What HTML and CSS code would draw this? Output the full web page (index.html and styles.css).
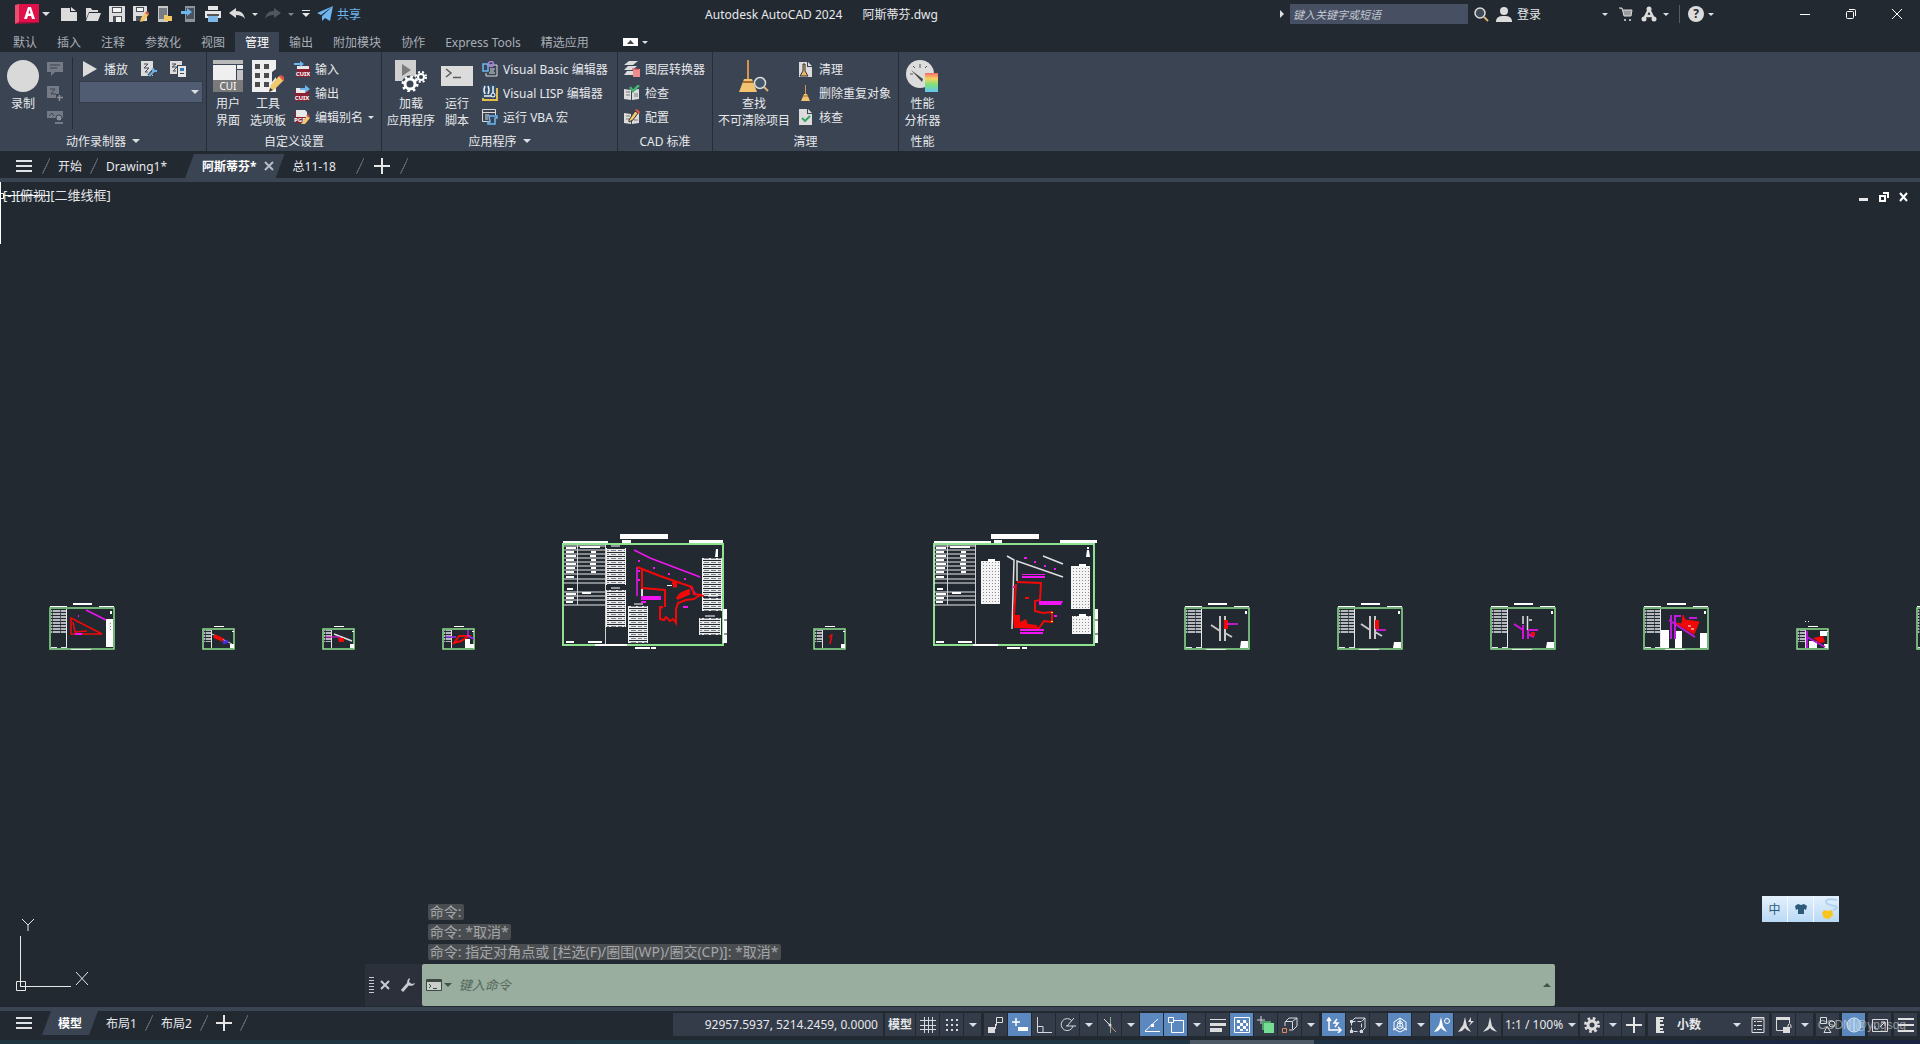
FILE: index.html
```html
<!DOCTYPE html>
<html lang="zh-CN">
<head>
    <meta charset="UTF-8">
    <meta name="viewport" content="width=device-width, initial-scale=1.0">
    <title>Autodesk AutoCAD 2024</title>
    <link rel="stylesheet" href="styles.css">
</head>
<body>
    <!-- title bar -->
    <header class="titlebar">
        <button class="app-btn" aria-label="应用程序菜单">
            <svg width="26" height="22" viewBox="0 0 26 22"><path d="M1 2l4-1v19l-4 1z" fill="#e8506e"/><path d="M5 1h20v19H5z" fill="#e0104a"/><path d="M1 21l4-2h20v1z" fill="#a80c38"/><path d="M10 16l4-12h3l4 12h-3l-1-3h-3l-1 3zM14.500 10.500h2l-1-4z" fill="#fff"/></svg>
            <span class="caret"></span>
        </button>
        <div class="quick">
            <button aria-label="新建"><svg width="16" height="16"><path d="M0 2h9v4h7v9H0z" fill="#dcdcdc"/><path d="M10 1l5 4h-5z" fill="#dcdcdc"/></svg></button>
            <button aria-label="打开"><svg width="16" height="16"><path d="M1 2h5l1 2h6v2H4L1 13z" fill="#dcdcdc"/><path d="M4 7h12l-3 8H1z" fill="#dcdcdc"/></svg></button>
            <button aria-label="保存"><svg width="16" height="16"><path d="M0 0h16v16H0z" fill="#dcdcdc"/><path d="M3 1h10v6H3zM4 10h9v6H4z" fill="#4a4f58"/><path d="M4 2h8v4H4zM7 11h5v5H7z" fill="#f4f4f4"/></svg></button>
            <button aria-label="另存为"><svg width="16" height="16"><path d="M0 0h14v15H0z" fill="#dcdcdc"/><path d="M3 1h8v5H3zM3 10h6v5H3z" fill="#4a4f58"/><path d="M4 2h6v3H4z" fill="#f4f4f4"/><path d="M8 12l5-6 3 2-5 7-4 1z" fill="#f3c765"/><path d="M12 7l2-2 2 2-1 2z" fill="#e0584b"/></svg></button>
            <button aria-label="从 Web 打开"><svg width="16" height="16"><path d="M1 0h10v16H1z" fill="#c8c8c8"/><path d="M2 2h8v11H2z" fill="#777d86"/><path d="M7 9h3l1 1h4v5H7z" fill="#f0c862"/></svg></button>
            <button aria-label="保存到 Web"><svg width="16" height="16"><path d="M4 0h10v16H4z" fill="#8e949c"/><path d="M5 2h8v11H5z" fill="#4c535e"/><path d="M0 5h6V2l5 4-5 4V8H0z" fill="#6db6f0"/></svg></button>
            <button aria-label="打印"><svg width="16" height="16"><path d="M3 0h10v4H3zM0 5h16v7H0z" fill="#e6e6e6"/><path d="M2 8h12v2H2z" fill="#555"/><path d="M3 10h10v6H3z" fill="#7db8e8"/></svg></button>
            <button aria-label="放弃"><svg width="16" height="16"><path d="M0 7l7-5v3c6 0 8 3 9 8-2-3-5-4-9-4v3z" fill="#dcdcdc"/></svg></button>
            <span class="caret small"></span>
            <button aria-label="重做"><svg width="16" height="16"><path d="M16 7L9 2v3C3 5 1 8 0 13c2-3 5-4 9-4v3z" fill="#50565f"/></svg></button>
            <span class="caret small dim"></span>
            <button class="customize" aria-label="自定义快速访问工具栏"><svg width="10" height="10"><path d="M1 1h8v1H1zM1 4h8L5 8z" fill="#e6e6e6"/></svg></button>
            <button class="share"><svg width="16" height="16"><path d="M16 0L0 7l4 2zM16 0L5 10v5l3-3 5 3z" fill="#6db6f0"/></svg>共享</button>
        </div>
        <h1 class="title"><span>Autodesk AutoCAD 2024</span><span>阿斯蒂芬.dwg</span></h1>
        <div class="account">
            <span class="caret right"></span>
            <input class="search" type="text" aria-label="搜索" placeholder="键入关键字或短语">
            <button aria-label="搜索"><svg width="16" height="16"><circle cx="7" cy="7" r="5" fill="#3f4a58" stroke="#dcdcdc" stroke-width="1.500"/><path d="M11 11l4 4" stroke="#d8b47a" stroke-width="2"/></svg></button>
            <button class="login"><svg width="16" height="16"><circle cx="8" cy="5" r="4" fill="#dcdcdc"/><path d="M0 16c0-5 3-6 8-6s8 1 8 6z" fill="#dcdcdc"/></svg>登录</button>
            <span class="caret small"></span>
            <button class="cart" aria-label="应用商店"><svg width="14" height="16"><path d="M0 2h3l2 8h7l1-6H4" fill="#9b9b9b" stroke="#dcdcdc"/><circle cx="6" cy="14" r="1" fill="#dcdcdc"/><circle cx="11" cy="14" r="1" fill="#dcdcdc"/></svg></button>
            <button aria-label="保持连接"><svg width="16" height="16"><path d="M8 3L3 13M8 3l5 10M5 10h6" fill="none" stroke="#dcdcdc" stroke-width="2.500"/><circle cx="8" cy="3" r="2.500" fill="#dcdcdc"/><circle cx="3" cy="13" r="2.500" fill="#dcdcdc"/><circle cx="13" cy="13" r="2.500" fill="#dcdcdc"/></svg></button>
            <span class="caret small tight"></span>
            <i class="bar"></i>
            <button class="help" aria-label="帮助">?</button>
            <span class="caret small tight"></span>
        </div>
        <div class="window-btns">
            <button aria-label="最小化"><svg width="12" height="12"><path d="M1 6.500h10" stroke="#fff"/></svg></button>
            <button aria-label="还原"><svg width="12" height="12" fill="none" stroke="#fff"><rect x="1.500" y="3.500" width="7" height="7" rx="1"/><path d="M4 1.500h5.500q1 0 1 1V8"/></svg></button>
            <button aria-label="关闭"><svg width="12" height="12"><path d="M1 1l10 10M11 1L1 11" stroke="#fff"/></svg></button>
        </div>
    </header>

    <!-- ribbon -->
    <nav class="tabs">
        <button>默认</button>
        <button>插入</button>
        <button>注释</button>
        <button>参数化</button>
        <button>视图</button>
        <button class="active">管理</button>
        <button>输出</button>
        <button>附加模块</button>
        <button>协作</button>
        <button>Express Tools</button>
        <button>精选应用</button>
        <button class="minimize" aria-label="最小化功能区"><svg width="15" height="8"><path d="M0 0h15v8H0z" fill="#fff"/><path d="M4 6h7L7.500 2z" fill="#444"/></svg><span class="caret small"></span></button>
    </nav>

    <section class="ribbon">
        <div class="panel recorder">
            <div class="panel-body">
                <button class="big"><svg width="32" height="32"><circle cx="16" cy="16" r="16" fill="#d9d9d9"/></svg>录制</button>
                <div class="stack dimmed">
                    <button aria-label="插入消息"><svg width="16" height="16"><path d="M0 1h16v10H8l-4 4v-4H0z" fill="#747b86"/><path d="M3 4h10M3 7h7" stroke="#3b4453"/></svg></button>
                    <button aria-label="插入基点"><svg width="16" height="16"><path d="M0 1h12v12H0z" fill="#747b86"/><path d="M3 4h5l-4 5h5" stroke="#3b4453" fill="none"/><path d="M9 9h7v7H9z" fill="#3b4453"/><path d="M10 12.500h6M12.500 10v6" stroke="#8a919b" stroke-width="1.500"/></svg></button>
                    <button aria-label="用户输入请求"><svg width="16" height="16"><path d="M0 2h16v7H0zM8 13h8v2H8z" fill="#747b86"/><circle cx="12" cy="9" r="3" fill="#8a919b" stroke="#3b4453"/><path d="M2 7l3-3 2 3" stroke="#3b4453" fill="none"/></svg></button>
                </div>
                <i class="rule"></i>
                <div class="player">
                    <div class="player-row">
                        <button class="small"><svg width="16" height="16"><path d="M1 0v16l14-8z" fill="#dcdcdc"/></svg>播放</button>
                        <button aria-label="首选项"><svg width="16" height="16"><path d="M0 0h12v15H0z" fill="#dcdcdc"/><path d="M3 3h4L3 7h5L4 11h3" stroke="#444c58" fill="none"/><path d="M8 15l6-7" stroke="#3b4453" stroke-width="4"/><path d="M8 15l6-6" stroke="#6fb0e6" stroke-width="2"/><path d="M12 7v3h4" stroke="#6fb0e6" fill="none" stroke-width="2"/></svg></button>
                        <button aria-label="管理动作宏"><svg width="16" height="16"><path d="M0 0h12v13H0z" fill="#dcdcdc"/><path d="M2 3h4L2 6h5L3 10h3" stroke="#444c58" fill="none"/><path d="M7 4h9v12H7z" fill="#3b4453"/><path d="M8 5h8v11H8z" fill="#e6e6e6"/><path d="M10 7h4v3h-4z" fill="#3478b8"/><path d="M10 12.500h4" stroke="#444c58"/></svg></button>
                    </div>
                    <div class="combo"><select aria-label="可用动作宏"><option></option></select></div>
                </div>
            </div>
            <button class="panel-title">动作录制器 <span class="caret"></span></button>
        </div>

        <div class="panel custom">
            <div class="panel-body">
                <button class="big"><svg width="30" height="32"><path d="M0 0h30v4H0z" fill="#b9b9b9"/><path d="M0 5h23v15H0zM24 5h6v4h-6z" fill="#efefef"/><path d="M24 10h6v10h-6z" fill="#c4c4c4"/><path d="M0 20h30v12H0z" fill="#7a7a7a"/><text x="15" y="30" text-anchor="middle" class="icon-text">CUI</text></svg>用户<br>界面</button>
                <button class="big"><svg width="32" height="32"><path d="M0 0h24v32H0z" fill="#efefef"/><path d="M3 4h5v5H3zM12 4h5v5h-5zM3 13h5v5H3zM12 13h5v5h-5zM3 22h5v5H3zM12 22h5v5h-5z" fill="#4b4b4b"/><path d="M20 12l4-3v8l-4 5z" fill="#3b4453"/><path d="M17 32l2-7 8-9 5 4-9 9z" fill="#f2c96d"/><path d="M27 16l2-1 3 2v3l-1 1z" fill="#e5534b"/><path d="M17 32l1-4 3 2z" fill="#333"/></svg>工具<br>选项板</button>
                <div class="stack">
                    <button class="small"><svg width="16" height="16"><path d="M3 5h13v11H3z" fill="#8d1f33"/><path d="M3 5h12v3H3z" fill="#e8e8e8"/><text x="9" y="15" class="tiny">CUIX</text><path d="M0 2h6V0l4 3-4 3V4H0z" fill="#6db6f0"/></svg>输入</button>
                    <button class="small"><svg width="16" height="16"><path d="M1 5h14v11H1z" fill="#8d1f33"/><path d="M2 3h9v5H2z" fill="#e8e8e8"/><text x="8" y="15" class="tiny">CUIX</text><path d="M6 3h5V0l5 4-5 4V5H6z" fill="#6db6f0"/></svg>输出</button>
                    <button class="small"><svg width="16" height="16"><path d="M1 2h12v12H1z" fill="#8d1f33"/><path d="M2 1h9l2 2v5H2z" fill="#e8e8e8"/><text x="6" y="13" class="tiny">PGP</text><path d="M7 15l6-8 3 2-5 6z" fill="#f2c96d"/><path d="M12 7l2-2 2 3z" fill="#e5534b"/></svg>编辑别名 <span class="caret small"></span></button>
                </div>
            </div>
            <div class="panel-title">自定义设置</div>
        </div>

        <div class="panel apps">
            <div class="panel-body">
                <button class="big"><svg width="32" height="32"><path d="M0 0h21v21H0z" fill="#cfcfcf"/><path d="M7 4v12l9-6z" fill="#7c7c7c"/><circle cx="15" cy="24" r="5" fill="#3b4453" stroke="#3b4453" stroke-width="7"/><circle cx="15" cy="24" r="5" fill="none" stroke="#fff" stroke-width="3"/><circle cx="15" cy="24" r="7" fill="none" stroke="#fff" stroke-width="3" stroke-dasharray="2.500 3"/><circle cx="26" cy="17" r="3" fill="#3b4453" stroke="#fff" stroke-width="2"/><circle cx="26" cy="17" r="5" fill="none" stroke="#fff" stroke-width="2" stroke-dasharray="2 2"/></svg>加载<br>应用程序</button>
                <button class="big"><svg width="32" height="32"><path d="M0 6h32v20H0z" fill="#dcdcdc"/><path d="M5 9l5 4-5 4M12 17.500h8" stroke="#5b5b5b" fill="none" stroke-width="1.500"/></svg>运行<br>脚本</button>
                <div class="stack">
                    <button class="small"><svg width="16" height="16" fill="none"><path d="M5 4h10v11H4v-3" stroke="#dcdcdc"/><path d="M8 8h5M8 10h4M7 12h6" stroke="#dcdcdc"/><rect x="1" y="3" width="5" height="7" stroke="#6db6f0" stroke-width="1.500"/><circle cx="9" cy="3" r="2.500" stroke="#a883e0" stroke-width="1.500"/></svg>Visual Basic 编辑器</button>
                    <button class="small"><svg width="16" height="16" fill="none"><path d="M1 13v2h14V3" stroke="#e5bd4e" stroke-width="2"/><path d="M0 0h14v13H0z" fill="#31506f"/><path d="M3 1Q1 5 3 9M6 1q2 4 0 8M11 1v11M2 11h11" stroke="#f0f0f0" stroke-width="1.500"/><circle cx="11" cy="10" r="2" fill="#31506f" stroke="#fff"/></svg>Visual LISP 编辑器</button>
                    <button class="small"><svg width="16" height="16" fill="none"><path d="M7 12.500H.500V.500h13V6M1 3.500h12M3 6h4M3 8h3M3 10h3" stroke="#dcdcdc"/><path d="M7 7h8v2h-2v6H6v-2h2z" stroke="#6db6f0" stroke-width="1.500"/></svg>运行 VBA 宏</button>
                </div>
            </div>
            <button class="panel-title">应用程序 <span class="caret"></span></button>
        </div>

        <div class="panel standards">
            <div class="panel-body">
                <div class="stack">
                    <button class="small"><svg width="16" height="16"><path d="M5 0h9L9 4H0zM4 5h9l-4 4H0zM3 10h6v4H0z" fill="#dcdcdc"/><path d="M9 8h7v8H9z" fill="#ee8b8e"/><path d="M8 8h7" stroke="#c2434b"/></svg>图层转换器</button>
                    <button class="small"><svg width="16" height="16"><path d="M0 4l7 1v10l-7-1zM8 5l7-1v10l-7 1z" fill="#dcdcdc"/><path d="M2 7h4M2 10h4M10 9h4M10 11h4" stroke="#7a7a7a"/><path d="M6 2l3 4 6-6" fill="none" stroke="#45b072" stroke-width="2.500"/></svg>检查</button>
                    <button class="small"><svg width="16" height="16"><path d="M0 4l7 1v10l-7-1zM8 5l7-1v10l-7 1z" fill="#dcdcdc"/><path d="M2 7h4M2 10h4M10 11h4" stroke="#7a7a7a"/><path d="M5 11l6-9 3 2-5 7-4 2z" fill="#f2c96d" stroke="#333"/><path d="M11 1l2-1 3 3-1 2z" fill="#e5534b"/></svg>配置</button>
                </div>
            </div>
            <div class="panel-title">CAD 标准</div>
        </div>

        <div class="panel cleanup">
            <div class="panel-body">
                <button class="big"><svg width="32" height="32"><path d="M9 0h2v19H9z" fill="#d6924f"/><path d="M6 19h8l5 13H1z" fill="#f2c472"/><path d="M5 22h10" stroke="#a96d2f" stroke-width="2"/><circle cx="22" cy="23" r="5.500" fill="#46576a" stroke="#dcdcdc" stroke-width="1.500"/><path d="M26 27l4 4" stroke="#d8b47a" stroke-width="2"/></svg>查找<br>不可清除项目</button>
                <div class="stack">
                    <button class="small"><svg width="16" height="16"><path d="M1 1h8v5h5v10H1z" fill="#dcdcdc"/><path d="M10 1l4 4h-4z" fill="#dcdcdc"/><path d="M5 3h2v7l3 5H2l3-5z" fill="#e9b869" stroke="#333"/></svg>清理</button>
                    <button class="small"><svg width="16" height="16"><path d="M7 0h1v9H7z" fill="#d6924f"/><path d="M6 9h3l3 7H3z" fill="#f2c472"/><path d="M5 11h5" stroke="#a96d2f"/></svg>删除重复对象</button>
                    <button class="small"><svg width="16" height="16"><path d="M1 0h8v5h5v11H1z" fill="#dcdcdc"/><path d="M10 0l4 4h-4z" fill="#dcdcdc"/><path d="M4 9l3 3 5-5" fill="none" stroke="#3aa566" stroke-width="2"/></svg>核查</button>
                </div>
            </div>
            <div class="panel-title">清理</div>
        </div>

        <div class="panel perf">
            <div class="panel-body">
                <button class="big"><svg width="32" height="32"><defs><linearGradient id="heat" x2="0" y2="1"><stop offset="0" stop-color="#f56b6b"/><stop offset=".3" stop-color="#f7d35e"/><stop offset=".6" stop-color="#7fe07a"/><stop offset="1" stop-color="#63c5f5"/></linearGradient></defs><circle cx="14" cy="14" r="14" fill="#dcdcdc"/><path d="M5 10l11 12 1-3z" fill="#4a4a4a"/><path d="M14 4v4M7 6l2 2M21 6l-2 2M4 14h3" stroke="#555"/><path d="M19 13h13v19H19z" fill="url(#heat)"/></svg>性能<br>分析器</button>
            </div>
            <div class="panel-title">性能</div>
        </div>
    </section>

    <!-- drawing tabs -->
    <nav class="files">
        <button class="menu" aria-label="文件选项卡菜单"></button>
        <i class="slash"></i>
        <button>开始</button>
        <i class="slash"></i>
        <button>Drawing1*</button>
        <div class="current">
            <button>阿斯蒂芬*</button>
            <button aria-label="关闭图形"><svg width="10" height="10"><path d="M1 1l8 8M9 1L1 9" stroke="#b8bdc6" stroke-width="2"/></svg></button>
        </div>
        <button class="third">总11-18</button>
        <i class="slash"></i>
        <button class="plus" aria-label="新图形"></button>
        <i class="slash"></i>
    </nav>

    <main class="viewport">
        <svg class="model" aria-label="模型空间">
            <defs>
                <pattern id="rows" width="20" height="4" patternUnits="userSpaceOnUse"><path d="M0 0h20v3H0z" fill="#e8e8e8"/><path d="M1 1.500h5M8 1.500h4M14 1.500h5" stroke="#7b8088"/></pattern>
                <pattern id="dots" width="3" height="3" patternUnits="userSpaceOnUse"><path d="M0 0h3v3H0z" fill="#f4f4f4"/><path d="M1 1h1v1H1z" fill="#8b8f95"/></pattern>
                <pattern id="lines" width="8" height="3" patternUnits="userSpaceOnUse"><path d="M0 0h8v2H0z" fill="#b4b7bb"/><path d="M3 0h1v2H3z" fill="#555b64"/></pattern>
                <g id="legend">
                    <path d="M0 2h41M0 6h41M0 10h41M0 14h41M0 18h41M0 22h41M0 26h41M0 30h41M0 35h41M0 39h41M0 48h41M0 52h41M0 56h41M0 61h41" stroke="#e8e8e8"/>
                    <path d="M2 4h10M2 8h8M2 12h10M2 16h8M2 20h10M2 24h9M2 28h8M2 33h8M3 45h6M2 50h10M2 54h8M2 58h7M16 3h20M27 8h5M26 12h6M27 16h5M26 20h6M27 24h5M27 28h5M18 49h9M2 98h8M24 98h14" stroke="#fff" stroke-width="2"/>
                    <path d="M13.500 0v61M41.500 0v100" stroke="#d0d0d0"/>
                </g>
                <g id="sheet-m">
                    <path d="M1 1h64v41H1z" fill="none" stroke="#8fe08f" stroke-width="1.500"/>
                    <path d="M24-4h19v2H24z" fill="#fff"/>
                    <path d="M1-.500h17M50-.500h15" stroke="#fff"/>
                    <path d="M2 3h16v23H2z" fill="url(#lines)"/>
                    <path d="M17.500 2v39M2 40.500h6M12 40.500h5M22 42.500h20" stroke="#e8e8e8"/>
                    <path d="M61 4h2v3h-2z" fill="#fff"/>
                </g>
                <g id="sheet-s">
                    <path d="M1 0h31v20H1z" fill="none" stroke="#8fe08f" stroke-width="1.500"/>
                    <path d="M12-3h10v1H12z" fill="#fff"/>
                    <path d="M2 1h7v12H2z" fill="url(#lines)"/>
                    <path d="M9.500 1v18" stroke="#ddd"/>
                    <path d="M28 15h4v4h-4zM30 2h2v1h-2z" fill="#fff"/>
                </g>
            </defs>
            <g transform="translate(0 -182)">
                <g transform="translate(550 525)">
                    <path d="M13 19h160v101H13z" fill="none" stroke="#8fe08f" stroke-width="2"/>
                    <path d="M70 9h48v5H70zM72 15h9v3h-9zM13 16h45v2H13zM139 15h34v3h-34z" fill="#fff"/>
                    <use href="#legend" x="14" y="19"/>
                    <path d="M56 23h20v37H56zM56 65h20v37H56zM78 81h20v37H78zM152 33h20v38h-20zM152 73h20v13h-20zM149 93h22v17h-22z" fill="url(#rows)"/>
                    <path d="M56.500 23v37M75.500 23v37M56.500 65v37M75.500 65v37M78.500 81v37M97.500 81v37M152.500 33v53M171.500 33v53M149.500 93v17M170.500 93v17" stroke="#f0f0f0"/>
                    <path d="M61 21h9M61 63h9M84 79h9M155 91h10M158 71h10" stroke="#fff"/>
                    <path d="M173 84h4v34h-4zM166 24h2v8h-3zM85 122h15v2H85zM101 122h5v2h-5zM45 119h32v2H45z" fill="#fff"/>
                    <path d="M174 95h3M174 109h3" stroke="#222931"/>
                    <path d="M84 25l16 8 50 19M87 42v29M140 61l6 9" fill="none" stroke="#f214f2" stroke-width="1.500"/>
                    <path d="M91 71h20v4H91zM91 76h5v2h-5zM88 35h2v2h-2zM103 42h2v2h-2zM118 48h2v2h-2zM134 53h2v2h-2zM133 81h5v2h-5zM88 45h2v2h-2zM88 54h2v2h-2z" fill="#f214f2"/>
                    <path d="M92 46v25" stroke="#ddd" stroke-width="2"/>
                    <path d="M87 42l23 9 32 11 2 8M92 45v18l23 2v17M109 82h4l-3 1v11l4 1 2-3 4 4 3-2 3 4v-14l2-6 8-3 8-1 6-4 4 1M152 70l-8-1" fill="none" stroke="#f30808" stroke-width="2"/>
                    <path d="M127 74l4-5 9-4M129 73l11-5M122 58h5M123 61h4" fill="none" stroke="#f30808" stroke-width="3"/>
                    <path d="M117 60h5v1h-5z" fill="#fff"/>
                </g>
                <g transform="translate(925 525)">
                    <path d="M9 19h160v101H9z" fill="none" stroke="#8fe08f" stroke-width="2"/>
                    <path d="M66 9h48v5H66zM69 15h8v3h-8zM9 16h57v2H9zM135 15h37v3h-37z" fill="#fff"/>
                    <use href="#legend" x="9" y="19"/>
                    <path d="M56 36h19v43H56zM146 41h19v43h-19zM147 91h19v18h-19z" fill="url(#dots)"/>
                    <path d="M63 34h7v3h-7zM154 39h7v3h-7zM154 89h7v3h-7zM170 84h3v34h-3zM82 122h13v2H82zM97 122h5v2h-5zM48 119h25v2H48zM162 22h2v2h-2zM162 25h2l1 7h-4z" fill="#fff"/>
                    <path d="M170 95h3M170 109h3" stroke="#222931"/>
                    <path d="M82 31l7 4-2 69M92 56V36l46 16M118 31l20 8" fill="none" stroke="#e0e0e0" stroke-width="1.500"/>
                    <path d="M97 49h23v1H97zM97 51h23v2H97zM114 76h24l-2 4h-22zM95 104h24v2H95zM95 107h23v2H95zM99 32h3v2h-3zM109 36h2v2h-2zM119 40h2v2h-2zM129 43h2v2h-2zM88 61h3v2h-3zM88 83h2v2h-2zM129 90h3v2h-3z" fill="#f214f2"/>
                    <path d="M92 57l24 1-1 17-5 1v10l8 2 9-1v10l-8-1-5 7-24-1-1-12 2-31" fill="none" stroke="#f30808" stroke-width="2"/>
                    <path d="M90 90h5v7l6-3 2 5 9 1v3H90zM100 72h4v2h-4z" fill="#f30808"/>
                    <path d="M126 96h2v1h-2zM126 87h2v1h-2z" fill="#ffe600"/>
                </g>

                <g transform="translate(49 607)">
                    <use href="#sheet-m"/>
                    <path d="M57 12h7v28h-7z" fill="#fff"/><path d="M59 14h3v10h-3z" fill="url(#dots)"/>
                    <path d="M37 3l20 10" stroke="#f214f2" stroke-width="1.500"/>
                    <path d="M22 11l31 16H22zM24 15l2 10 12-1" fill="none" stroke="#f30808" stroke-width="1.500"/>
                    <path d="M26 26h7v2h-7zM29 8h1v2h-1z" fill="#f214f2"/>
                </g>
                <g transform="translate(202 629)">
                    <use href="#sheet-s"/>
                    <path d="M10 5l20 10" stroke="#ddd"/><path d="M12 7l9 4" stroke="#f30808" stroke-width="4"/><path d="M21 14l5-2" stroke="#4a2ee0" stroke-width="3"/>
                </g>
                <g transform="translate(322 629)">
                    <use href="#sheet-s"/>
                    <path d="M12 5l18 7" stroke="#e0e0e0" stroke-width="1.500"/><path d="M4 8h14" stroke="#f214f2"/><path d="M16 9h6v4h-5z" fill="#f30808"/>
                </g>
                <g transform="translate(442 629)">
                    <use href="#sheet-s"/>
                    <path d="M12 14l5-7h10l-8 5z" fill="none" stroke="#f30808" stroke-width="2"/><path d="M26 1v6l6 3M4 8h10" fill="none" stroke="#9b30ee" stroke-width="1.500"/><path d="M23 10h5v9h-5z" fill="#fff"/>
                </g>
                <g transform="translate(813 629)">
                    <use href="#sheet-s"/>
                    <path d="M19 5l-2 10M16 8l3-2" stroke="#f30808" stroke-width="1.500"/>
                </g>
                <g transform="translate(1184 607)">
                    <use href="#sheet-m"/>
                    <path d="M36 9v25M41 9v25M27 18l9 6M41 26l7 4" stroke="#c9c9c9" stroke-width="2"/><path d="M42 13v9" stroke="#f30808" stroke-width="4"/><path d="M43 17h11" stroke="#f214f2" stroke-width="1.500"/><path d="M57 34h7v7h-8z" fill="#fff"/>
                </g>
                <g transform="translate(1337 607)">
                    <use href="#sheet-m"/>
                    <path d="M33 9v23M38 9v23M24 17l9 6M38 25l7 4" stroke="#c9c9c9" stroke-width="2"/><path d="M40 13v9" stroke="#f30808" stroke-width="4"/><path d="M39 23h10" stroke="#f214f2" stroke-width="1.500"/><path d="M57 35h7v6h-8z" fill="#fff"/>
                </g>
                <g transform="translate(1490 607)">
                    <use href="#sheet-m"/>
                    <path d="M33 9v8M37.500 9v14M39 13h3" stroke="#e0e0e0" stroke-width="1.500"/><path d="M24 17l9 6M33 18v14M38 23v9M38 23h10M38 27l6 3" stroke="#d014d8" stroke-width="2"/><path d="M41 25h4v4h-4z" fill="#f30808"/><path d="M57 35h7v6h-8z" fill="#fff"/>
                </g>
                <g transform="translate(1643 607)">
                    <use href="#sheet-m"/>
                    <path d="M18 23h8v18h-8zM32 24h7v17h-7zM57 26h7v15h-7z" fill="#fff"/><path d="M28 8v24M32 8v24M26 13l26 17M33 9h5M46 11h8" stroke="#c01ae0" stroke-width="2"/><path d="M33 16l18 11 5-12-14-2-2-5-1 9z" fill="#f30808" stroke="#f30808"/><path d="M45 19h3M48 22h3" stroke="#fff"/>
                </g>
                <g transform="translate(1796 629)">
                    <use href="#sheet-s"/>
                    <path d="M9-8h1v1H9zM12-8h1v1h-1zM13 12h8v7h-8zM24 2h7v5h-7z" fill="#fff"/><path d="M11 2v17M11 8l18 10" stroke="#b01ad0" stroke-width="2"/><path d="M17 9l10-2 2 6-5 1z" fill="#f30808"/>
                </g>
                <use href="#sheet-m" x="1916" y="607"/>
                <!-- crosshair -->
                <path d="M0 193.500h3.500v5H0M4 195.500h46" stroke="#fff" fill="none"/><path d="M.500 182v62" stroke="#fff"/>
            </g>
        </svg>
        <div class="view-label">[-][俯视][二维线框]</div>
        <div class="view-btns">
            <button aria-label="最小化"><svg width="10" height="10"><path d="M0 6h9v3H0z" fill="#e8e8e8"/></svg></button>
            <button aria-label="还原"><svg width="10" height="10" fill="none" stroke="#fff" stroke-width="2"><path d="M1 4h5v5H1zM4 1h5v5"/></svg></button>
            <button aria-label="关闭"><svg width="10" height="10"><path d="M1 1l7 8M8 1L1 9" stroke="#fff" stroke-width="2"/></svg></button>
        </div>
        <svg class="ucs" width="80" height="80" fill="none" stroke="#e8e8e8"><path d="M6.500 20v50M2.500 65.500h9v9h-9zM6 70.500h51M8 3l6 6 6-6M14 9v6M62 56l12 13M74 56L62 69"/></svg>
        <div class="ime">
            <button>中</button>
            <button aria-label="皮肤"><svg width="14" height="12"><path d="M4 1l3 1 3-1 3 2-1 4-2-1v5H4V6L2 7 1 3z" fill="#2c5a78"/></svg></button>
            <button aria-label="工具箱"><svg width="24" height="24"><path d="M22 3Q10 1 11 5q1 3 9 4 4 2-2 4" fill="none" stroke="#b3d2ef" stroke-width="2"/><path d="M9 13l4 1 4-1 1 5-4 4-5-1-2-5z" fill="#f7c51e"/></svg></button>
        </div>
        <div class="command">
            <ul class="history">
                <li>命令:</li>
                <li>命令: *取消*</li>
                <li>命令: 指定对角点或 [栏选(F)/圈围(WP)/圈交(CP)]: *取消*</li>
            </ul>
            <div class="prompt">
                <div class="prompt-tools">
                    <i class="grip"></i>
                    <button aria-label="关闭"><svg width="10" height="10"><path d="M1 1l8 8M9 1L1 9" stroke="#c8ccd2" stroke-width="2"/></svg></button>
                    <button class="wrench" aria-label="自定义"><svg width="16" height="16"><path d="M2 14l7-8" stroke="#c8ccd2" stroke-width="3"/><path d="M10 1a4 4 0 1 0 5 5l-3 1-3-2z" fill="#c8ccd2"/></svg></button>
                </div>
                <div class="prompt-line">
                    <button aria-label="最近使用的命令"><svg width="16" height="12"><path d="M.500.500h15v11H.500z" fill="#c9d0cc" stroke="#3d4a44"/><path d="M1 1h14v2H1z" fill="#3d4a44"/><path d="M3 5l2 2-2 2M7 9.500h4" stroke="#3d4a44" fill="none"/></svg><span class="caret green"></span></button>
                    <input type="text" aria-label="命令行" placeholder="键入命令">
                    <span class="caret up"></span>
                </div>
            </div>
        </div>
    </main>

    <!-- layout tabs and status bar -->
    <footer class="status">
        <nav class="layouts">
            <button class="menu" aria-label="布局菜单"></button>
            <button class="current">模型</button>
            <button>布局1</button>
            <i class="slash"></i>
            <button>布局2</button>
            <i class="slash"></i>
            <button class="plus" aria-label="新建布局"></button>
            <i class="slash"></i>
        </nav>
        <div class="tools">
            <button class="coords">92957.5937, 5214.2459, 0.0000</button>
            <button class="space">模型</button>
            <button class="t" aria-label="栅格"><svg width="16" height="16"><path d="M4.500 0v16M8.500 0v16M12.500 0v16M0 3.500h16M0 8.500h16M0 12.500h16" stroke="#d5d9df"/></svg></button>
            <button class="t" aria-label="捕捉"><svg width="16" height="16"><path d="M2 3h13M2 8h13M2 13h13" stroke="#d5d9df" stroke-width="2" stroke-dasharray="2 3"/></svg></button>
            <button class="c" aria-label="捕捉设置"><span class="caret"></span></button>
            <button class="t gap" aria-label="推断约束"><svg width="16" height="16"><path d="M0 10h7v6H0z" fill="#dcdcdc"/><path d="M8.500 8.500v-8h6v5h-6M7.500 12V7" fill="none" stroke="#dcdcdc"/></svg></button>
            <button class="t on" aria-label="动态输入"><svg width="18" height="16"><path d="M1 5h8M5 1v8" stroke="#fff" stroke-width="1.500"/><path d="M7 10h10v4H7z" fill="#fff"/></svg></button>
            <button class="t" aria-label="正交"><svg width="16" height="16"><path d="M1.500 0v15.500H16M2 9.500h5V15" fill="none" stroke="#d5d9df"/></svg></button>
            <button class="t" aria-label="极轴追踪"><svg width="16" height="16" fill="none" stroke="#d5d9df"><path d="M12 4A6 6 0 1 0 13 9M7 9l7-8M6 9h10"/></svg></button>
            <button class="c" aria-label="极轴设置"><span class="caret"></span></button>
            <button class="t" aria-label="等轴测"><svg width="16" height="16"><path d="M2 2l12 13" stroke="#c98a8a"/><path d="M8.500 0v16" stroke="#7fb183"/><path d="M2 2l5 5" stroke="#d5d9df"/><circle cx="8" cy="8" r="1.500" fill="#d5d9df"/></svg></button>
            <button class="c" aria-label="等轴测设置"><span class="caret"></span></button>
            <button class="t on" aria-label="对象捕捉追踪"><svg width="16" height="16"><path d="M1 14L14 2M1 14.500h15" stroke="#fff"/><path d="M7 7h3v3H7z" fill="#fff"/></svg></button>
            <button class="t on" aria-label="对象捕捉"><svg width="16" height="16" fill="none" stroke="#fff"><path d="M3.500 6v9.500h12v-12H6M.500.500h5v5h-5z"/></svg></button>
            <button class="c" aria-label="对象捕捉设置"><span class="caret"></span></button>
            <button class="t" aria-label="线宽"><svg width="16" height="16"><path d="M0 2h16v1H0zM0 6h16v3H0zM0 11h12v4H0z" fill="#dcdcdc"/></svg></button>
            <button class="t on" aria-label="透明度"><svg width="16" height="16"><path d="M.500.500h15v15H.500z" fill="none" stroke="#fff"/><path d="M3 3h3v3H3zM9 3h3v3H9zM6 6h3v3H6zM12 6h2v3h-2zM3 9h3v3H3zM9 9h3v3H9zM6 12h3v2H6zM12 12h2v2h-2z" fill="#fff"/></svg></button>
            <button class="t" aria-label="选择循环"><svg width="18" height="18"><path d="M0 4h8M4 0v8" stroke="#d5d9df"/><path d="M5 5h9v2H7v7H5z" fill="#4da368"/><path d="M7 7h10v10H7z" fill="#74dc93"/></svg></button>
            <button class="t" aria-label="三维对象捕捉"><svg width="16" height="16" fill="none" stroke="#d5d9df"><path d="M3 9V5l4-4h8v8l-4 4H7M3.500 4.500h7V12M11 4l4-3"/><path d="M.500 11.500h4v4h-4z" stroke="#e38a5a"/></svg></button>
            <button class="c" aria-label="三维捕捉设置"><span class="caret"></span></button>
            <button class="t on gap" aria-label="动态 UCS"><svg width="16" height="16" fill="none" stroke="#fff" stroke-width="1.500"><path d="M3 1v12h12M1 4l2-3 2 3M12 10l3 3-3 3M11 2L8 6h4l-3 4"/></svg></button>
            <button class="t" aria-label="选择过滤"><svg width="16" height="16" fill="none" stroke="#d5d9df"><path d="M1.500 4.500h10v10h-10z" stroke-dasharray="4 2"/><path d="M2 4l3-3h10v10l-3 3M12 4l3-3"/><path d="M0 3h3v3H0zM0 13h3v3H0zM10 13h3v3h-3z" fill="#d5d9df" stroke="none"/></svg></button>
            <button class="c" aria-label="过滤设置"><span class="caret"></span></button>
            <button class="t on" aria-label="小控件"><svg width="18" height="16" fill="none" stroke="#fff"><path d="M9 1l6 4v7l-6 3-6-3V5zM9 1v8l-7 4M9 9l7 4M6 6l3-2 3 2"/><circle cx="9" cy="9" r="3"/></svg></button>
            <button class="c" aria-label="小控件设置"><span class="caret"></span></button>
            <button class="t on" aria-label="注释可见性"><svg width="18" height="16"><path d="M8 0l2 9 4 6-4-2-2-2-3 3-4 1 5-7z" fill="#fff"/><circle cx="14" cy="4" r="2.500" fill="none" stroke="#fff"/></svg></button>
            <button class="t" aria-label="自动缩放"><svg width="18" height="16"><path d="M8 0l2 9 4 6-4-2-2-2-3 3-4 1 5-7z" fill="#dcdcdc"/><path d="M14 0l-3 5h3l-2 4 5-5h-3z" fill="#dcdcdc"/></svg></button>
            <button class="t" aria-label="注释比例"><svg width="16" height="16"><path d="M8 0l2 9 5 6-5-2-2-2-2 2-5 2 5-6z" fill="#dcdcdc"/></svg></button>
            <button class="scale">1:1 / 100%<span class="caret"></span></button>
            <button class="t gap" aria-label="切换工作空间"><svg width="16" height="16"><circle cx="8" cy="8" r="4" fill="none" stroke="#dcdcdc" stroke-width="3"/><circle cx="8" cy="8" r="6.500" fill="none" stroke="#dcdcdc" stroke-width="3" stroke-dasharray="2.600 2.500"/></svg></button>
            <button class="c" aria-label="工作空间"><span class="caret"></span></button>
            <button class="t" aria-label="注释监视器"><svg width="16" height="16"><path d="M8 0v16M0 8h16" stroke="#e6e6e6" stroke-width="2"/></svg></button>
            <label class="units gap"><svg width="8" height="16"><path d="M0 0h8v2H4v1h3v2H4v2h4v2H4v2h3v2H4v1h4v2H0z" fill="#e0e0e0"/></svg><select aria-label="单位"><option>小数</option></select><span class="caret"></span></label>
            <button class="t" aria-label="快捷特性"><svg width="14" height="16"><path d="M1 .500h12v15H1zM3 4.500h2M3 8.500h2M3 12.500h2M6 4.500h5M6 8.500h5M6 12.500h5M1 2h12" fill="none" stroke="#e0e0e0"/></svg></button>
            <button class="t gap" aria-label="锁定用户界面"><svg width="16" height="16"><path d="M7 13.500H.500V1.500h13V6" fill="none" stroke="#dcdcdc"/><path d="M0 0h14v3H0zM7 10h7v6H7z" fill="#dcdcdc"/><path d="M12 10V8q2-3 3 1v2" fill="none" stroke="#dcdcdc"/></svg></button>
            <button class="c" aria-label="锁定设置"><span class="caret"></span></button>
            <button class="t gap" aria-label="隔离对象"><svg width="16" height="16" fill="none" stroke="#dcdcdc"><path d="M.500.500h6v6h-6zM4 15.500l3-6 4 6z"/><circle cx="12" cy="7" r="3"/></svg></button>
            <button class="t on gap" aria-label="图形性能"><svg width="18" height="18"><circle cx="9" cy="9" r="7" fill="#8db7e0" stroke="#d9e6f3"/><path d="M9 3v12" stroke="#d9e6f3"/></svg></button>
            <button class="t gap" aria-label="全屏显示"><svg width="16" height="16" fill="none" stroke="#dcdcdc"><path d="M.500 2.500h15v12H.500zM9 5h4v4M13 5l-5 5M3 9v3h3"/></svg></button>
            <button class="t gap" aria-label="自定义"><svg width="16" height="16"><path d="M0 2h16M0 8h16M0 14h16" stroke="#e0e0e0" stroke-width="2"/></svg></button>
        </div>
        <span class="watermark">CSDN @yngsqq</span>
    </footer>
    <div class="taskbar"><i></i></div>
</body>
</html>
```

FILE: styles.css
```css
* {
    box-sizing: border-box;
    padding: 0;
    margin: 0;
}
body {
    display: flex;
    flex-direction: column;
    height: 100vh;
    overflow: hidden;
    background: #222931;
    color: #e6e8eb;
    font-family: 'Noto Sans', 'Noto Sans CJK SC', sans-serif;
    font-size: 12px;
    line-height: 17px;
}
button, input, select {
    font: inherit;
    color: inherit;
    background: none;
    border: none;
    border-radius: 0;
    outline: none;
    white-space: nowrap;
}
svg {
    display: block;
    flex: none;
}
.caret {
    flex: none;
    width: 0;
    height: 0;
    border: 4px solid transparent;
    border-top-color: #dcdfe3;
    border-bottom: none;
}
.caret.small {
    border-width: 3px;
    border-bottom: none;
}
.caret.dim {
    border-top-color: #80858d;
}
.caret.right {
    border: 4px solid transparent;
    border-left-color: #dcdfe3;
    border-right: none;
}
.caret.up {
    border: 4px solid transparent;
    border-bottom-color: #41564a;
    border-top: none;
}
.caret.green {
    border-top-color: #41564a;
}

/* title bar */
.titlebar {
    display: flex;
    align-items: center;
    height: 28px;
    flex: none;
}
.app-btn {
    display: flex;
    align-items: center;
    gap: 2px;
    margin-left: 14px;
    width: 43px;
}
.quick, .account, .window-btns {
    display: flex;
    align-items: center;
}
.quick button {
    display: flex;
    justify-content: center;
    width: 24px;
}
.quick .caret {
    margin: 0 3px;
}
.quick .customize {
    width: 18px;
}
.quick .share {
    align-items: center;
    gap: 4px;
    width: 48px;
    color: #6db6f0;
}
.title {
    flex: 1;
    display: flex;
    justify-content: center;
    gap: 20px;
    font-size: 12px;
    font-weight: normal;
}
.search {
    width: 178px;
    height: 20px;
    margin: 0 3px 0 6px;
    padding: 0 3px;
    background: #474f62;
    font-size: 11px;
    font-style: italic;
}
.search::placeholder {
    color: #c3c8d2;
}
.account button {
    display: flex;
    justify-content: center;
    width: 20px;
}
.account .login {
    justify-content: flex-start;
    align-items: center;
    gap: 5px;
    margin-left: 5px;
    width: 106px;
}
.account .cart {
    margin: 0 3px 0 8px;
}
.account .tight {
    margin: 0 6px 0 4px;
}
.bar {
    width: 1px;
    height: 18px;
    margin: 0 8px 0 4px;
    background: #555c66;
}
.account .help {
    width: 16px;
    height: 16px;
    border-radius: 50%;
    background: #dcdcdc;
    color: #222931;
    font-weight: bold;
    line-height: 16px;
}
.window-btns {
    margin-left: 62px;
}
.window-btns button {
    display: flex;
    justify-content: center;
    width: 46px;
}

/* ribbon */
.tabs {
    display: flex;
    align-items: flex-end;
    height: 24px;
    flex: none;
    padding-left: 3px;
}
.tabs button {
    height: 20px;
    padding: 0 10px;
    color: #a9aeb6;
}
.tabs .active {
    background: #3b4453;
    color: #fff;
}
.tabs .minimize {
    display: flex;
    align-items: center;
    gap: 4px;
    margin-left: 14px;
}
.ribbon {
    display: flex;
    flex: none;
    height: 99px;
    background: #3b4453;
}
.panel {
    display: flex;
    flex-direction: column;
    justify-content: space-between;
    padding-top: 5px;
    border-right: 1px solid #262d37;
}
.panel:last-child {
    border-right: none;
}
.recorder {
    width: 207px;
}
.custom {
    width: 175px;
}
.apps {
    width: 236px;
}
.standards {
    width: 95px;
}
.cleanup {
    width: 186px;
}
.perf {
    width: 47px;
}
.panel-body {
    display: flex;
    align-items: flex-start;
}
.panel-title {
    display: flex;
    justify-content: center;
    align-items: center;
    gap: 6px;
    height: 20px;
}
.big {
    display: flex;
    flex-direction: column;
    align-items: center;
    padding-top: 3px;
    text-align: center;
    line-height: 17px;
}
.big svg {
    margin-bottom: 3px;
}
.stack button, .player-row button {
    display: flex;
    align-items: center;
    gap: 5px;
    height: 24px;
}
.icon-text {
    font-size: 10px;
    fill: #fff;
}
.tiny {
    font-size: 6px;
    font-weight: bold;
    text-anchor: middle;
    fill: #fff;
}
.rule {
    width: 1px;
    height: 72px;
    margin: 0 6px 0 9px;
    background: #262d37;
}
.recorder .big {
    margin: 0 8px 0 7px;
}
.player-row {
    display: flex;
    gap: 13px;
    padding-left: 3px;
}
.player-row .small {
    gap: 6px;
}
.combo {
    position: relative;
    width: 124px;
}
.combo select {
    display: block;
    appearance: none;
    width: 100%;
    height: 22px;
    background: #4f5c72;
    border: 1px solid #343c49;
}
.combo::after {
    content: "";
    position: absolute;
    top: 9px;
    right: 4px;
    border: 4px solid transparent;
    border-top-color: #dcdfe3;
    border-bottom: none;
}
.custom .panel-body {
    padding-left: 4px;
}
.custom .big {
    width: 34px;
}
.custom .big + .big {
    width: 46px;
    margin-right: 3px;
}
.apps .panel-body {
    padding-left: 5px;
}
.apps .big {
    margin-right: 6px;
}
.apps .stack {
    margin-left: 3px;
}
.standards .panel-body {
    padding-left: 6px;
}
.cleanup .panel-body {
    padding-left: 5px;
    gap: 8px;
}
.perf .big {
    margin: 0 auto;
}

/* drawing tabs */
.files {
    display: flex;
    align-items: center;
    flex: none;
    height: 31px;
    padding-top: 3px;
    border-bottom: 4px solid #3b4453;
}
.menu {
    width: 16px;
    height: 12px;
    margin-left: 16px;
    border-top: 2px solid #e0e2e5;
    border-bottom: 2px solid #e0e2e5;
    background: linear-gradient(#e0e2e5, #e0e2e5) center / 16px 2px no-repeat;
}
.slash {
    width: 12px;
    height: 16px;
    margin: 0 6px;
    background: linear-gradient(115deg, transparent 47%, #5a616c 48%, #5a616c 54%, transparent 55%);
}
.menu + .slash {
    margin-left: 8px;
}
.current {
    background: #3b4453;
    color: #fff;
    font-weight: bold;
}
.files .current {
    display: flex;
    align-items: center;
    gap: 7px;
    height: 24px;
    margin-left: 18px;
    padding: 0 11px 0 17px;
    clip-path: polygon(9px 0, 100% 0, calc(100% - 9px) 100%, 0 100%);
}
.files .third {
    margin: 0 12px 0 8px;
}
.plus {
    width: 16px;
    height: 16px;
    margin: 0 2px;
    background: linear-gradient(#e6e6e6, #e6e6e6) center / 16px 2px no-repeat, linear-gradient(#e6e6e6, #e6e6e6) center / 2px 16px no-repeat;
}

/* model space */
.viewport {
    position: relative;
    flex: 1;
    min-height: 0;
    overflow: hidden;
}
.model {
    width: 100%;
    height: 100%;
}
.view-label {
    position: absolute;
    top: 5px;
    left: 3px;
    font-size: 13px;
}
.view-btns {
    position: absolute;
    top: 10px;
    right: 11px;
    display: flex;
    gap: 10px;
}
.ucs {
    position: absolute;
    left: 14px;
    bottom: 11px;
}
.ime {
    position: absolute;
    right: 81px;
    bottom: 85px;
    display: flex;
    gap: 1px;
    height: 26px;
    background: #f4f9ff;
}
.ime button {
    display: flex;
    align-items: center;
    justify-content: center;
    width: 25px;
    background: linear-gradient(#e4f1fd, #b9d9f5);
    color: #2c5a78;
}
.command {
    position: absolute;
    left: 19%;
    right: 19%;
    bottom: 1px;
}
.history {
    list-style: none;
    display: flex;
    flex-direction: column;
    align-items: flex-start;
    gap: 4px;
    margin: 0 0 4px 63px;
    font-size: 14px;
    line-height: 16px;
    color: #a3a6a9;
}
.history li {
    padding: 0 2px;
    border-radius: 2px;
    background: #4a4d50;
}
.prompt {
    display: flex;
    height: 42px;
}
.prompt-tools {
    display: flex;
    align-items: center;
    gap: 6px;
    width: 57px;
    padding-left: 4px;
    background: #2b303b;
}
.prompt-tools button {
    display: flex;
}
.prompt-tools .wrench {
    margin-left: 4px;
}
.grip {
    width: 5px;
    height: 17px;
    background: repeating-linear-gradient(#c8ccd2 0 1px, transparent 1px 3px);
}
.prompt-line {
    display: flex;
    align-items: center;
    flex: 1;
    padding: 0 4px;
    border-radius: 2px;
    background: #99ae9f;
}
.prompt-line button {
    display: flex;
    align-items: center;
    gap: 2px;
}
.prompt-line input {
    flex: 1;
    margin-left: 7px;
    font-size: 13px;
    font-style: italic;
    color: #222931;
}
.prompt-line input::placeholder {
    color: #54675b;
}

/* status bar */
.status {
    position: relative;
    display: flex;
    justify-content: space-between;
    flex: none;
    height: 33px;
    border-top: 4px solid #3b4453;
}
.layouts {
    display: flex;
    align-items: center;
    height: 24px;
}
.layouts .current {
    height: 24px;
    margin: 0 8px 0 10px;
    padding: 0 16px;
    clip-path: polygon(9px 0, 100% 0, calc(100% - 9px) 100%, 0 100%);
}
.layouts .plus {
    margin: 0;
}
.tools {
    display: flex;
    height: 23px;
    margin-top: 2px;
    padding-right: 2px;
}
.tools button, .units {
    display: flex;
    align-items: center;
    justify-content: center;
    background: #343c49;
}
.tools .coords {
    justify-content: flex-end;
    width: 210px;
    padding-right: 5px;
    margin-right: 2px;
}
.tools .space {
    width: 30px;
    margin-right: 1px;
    font-weight: bold;
}
.tools .t {
    width: 23px;
    margin-right: 1px;
}
.tools .c {
    width: 17px;
    margin-right: 1px;
}
.tools .on {
    background: #5b88bf;
}
.tools .gap {
    margin-left: 2px;
}
.tools .scale {
    gap: 5px;
    width: 75px;
    margin-left: 1px;
}
.units {
    width: 98px;
    padding: 0 5px 0 8px;
    gap: 13px;
}
.units select {
    appearance: none;
    flex: 1;
    min-width: 0;
    font-weight: bold;
}
.watermark {
    position: absolute;
    right: 14px;
    top: 6px;
    font-family: 'Liberation Sans', sans-serif;
    font-size: 12px;
    color: rgba(220, 220, 220, 0.6);
}
.taskbar {
    flex: none;
    height: 4px;
    background: linear-gradient(to right, #1f3640, #1f3645 60%, #1a2342);
}
.taskbar i {
    display: block;
    width: 124px;
    height: 4px;
    margin-left: 62%;
    background: #4d5a66;
}
```
